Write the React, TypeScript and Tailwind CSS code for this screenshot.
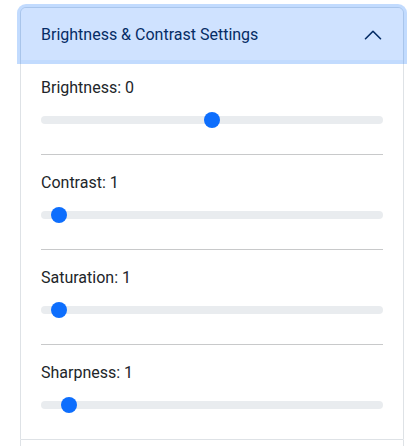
import React from "react";

type Setting = { label: string; value: number; frac: number };

const settings: Setting[] = [
  { label: "Brightness", value: 0, frac: 0.5 },
  { label: "Contrast", value: 1, frac: 10 / 326 },
  { label: "Saturation", value: 1, frac: 10 / 326 },
  { label: "Sharpness", value: 1, frac: 20 / 326 },
];

function Chevron() {
  return (
    <svg viewBox="0 0 16 16" className="h-5 w-5 shrink-0 rotate-180" fill="none" aria-hidden>
      <path d="M2 5L8 11L14 5" stroke="#052c65" strokeWidth="1.3" strokeLinecap="round" strokeLinejoin="round" />
    </svg>
  );
}

function Slider({ frac }: { frac: number }) {
  return (
    <div className="pt-2 pb-[6px]">
      <div className="relative flex h-6 items-center">
        <div className="h-2 w-full rounded-full bg-[#e9ecef]" />
        <div
          className="absolute top-1 h-4 w-4 rounded-full bg-[#0d6efd]"
          style={{ left: `calc(${frac} * (100% - 16px))` }}
        />
      </div>
    </div>
  );
}

export default function App() {
  return (
    <div
      className="min-h-screen bg-white pt-[7px] text-[#212529]"
      style={{ fontFamily: 'Roboto, "Noto Sans", sans-serif' }}
    >
      <div className="ml-5 w-[384px]">
        <div className="rounded-t-md border border-[#dee2e6]">
          <button
            type="button"
            className="relative z-10 flex h-[52px] w-full items-center justify-between rounded-t-[5px] bg-[#cfe2ff] px-5 pt-px text-left text-base text-[#052c65] shadow-[0_0_0_4px_rgba(13,110,253,0.25)]"
          >
            <span>Brightness &amp; Contrast Settings</span>
            <Chevron />
          </button>
          <div className="px-5 pt-4 pb-4">
            {settings.map((s, i) => (
              <div key={s.label}>
                {i > 0 && <hr className="my-4 border-t border-[#c8c9ca]" />}
                <label className="block text-base leading-6">
                  {s.label}: {s.value}
                </label>
                <Slider frac={s.frac} />
              </div>
            ))}
          </div>
        </div>
        <div className="h-10 border-x border-[#dee2e6]" />
      </div>
    </div>
  );
}
